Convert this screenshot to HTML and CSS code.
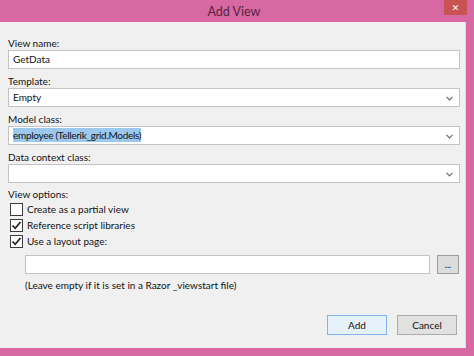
FILE: index.html
```html
<!DOCTYPE html>
<html lang="en">
<head>
  <meta charset="UTF-8">
  <title>Add View</title>
  <link rel="stylesheet" href="styles.css">
</head>
<body>
  <div class="window">
    <!-- Title bar -->
    <div class="titlebar">
      <span class="title">Add View</span>
      <button class="close">&#x2715;</button>
    </div>

    <!-- Dialog body -->
    <div class="panel">
      <div class="field">
        <div class="label">View name:</div>
        <div class="box">GetData</div>
      </div>
      <div class="field">
        <div class="label">Template:</div>
        <div class="box select">Empty
          <svg class="arrow" width="7" height="5" viewBox="0 0 7 5"><path d="M0.5 0.8 L3.5 3.8 L6.5 0.8" fill="none" stroke="#6d6d6d" stroke-width="1.2"/></svg>
        </div>
      </div>
      <div class="field">
        <div class="label">Model class:</div>
        <div class="box select"><span class="selected">employee (Tellerik_grid.Models)</span>
          <svg class="arrow" width="7" height="5" viewBox="0 0 7 5"><path d="M0.5 0.8 L3.5 3.8 L6.5 0.8" fill="none" stroke="#6d6d6d" stroke-width="1.2"/></svg>
        </div>
      </div>
      <div class="field">
        <div class="label">Data context class:</div>
        <div class="box select">
          <svg class="arrow" width="7" height="5" viewBox="0 0 7 5"><path d="M0.5 0.8 L3.5 3.8 L6.5 0.8" fill="none" stroke="#6d6d6d" stroke-width="1.2"/></svg>
        </div>
      </div>

      <div class="options">
        <div class="label">View options:</div>
        <div class="check-row"><span class="check"></span>Create as a partial view</div>
        <div class="check-row"><span class="check">
          <svg width="11" height="11" viewBox="0 0 11 11"><path d="M1.5 5.5 L4.2 8.3 L9.5 2" fill="none" stroke="#222" stroke-width="1.7"/></svg>
        </span>Reference script libraries</div>
        <div class="check-row"><span class="check">
          <svg width="11" height="11" viewBox="0 0 11 11"><path d="M1.5 5.5 L4.2 8.3 L9.5 2" fill="none" stroke="#222" stroke-width="1.7"/></svg>
        </span>Use a layout page:</div>

        <div class="layout-row">
          <div class="box layout-box"></div>
          <button class="browse">...</button>
        </div>
        <div class="hint">(Leave empty if it is set in a Razor _viewstart file)</div>
      </div>

      <div class="actions">
        <button class="btn default">Add</button>
        <button class="btn">Cancel</button>
      </div>
    </div>
  </div>
</body>
</html>
```

FILE: styles.css
```css
body {
  margin: 0;
  background: #d868a2;
  font-family: Lato, "Noto Sans", sans-serif;
  font-size: 10px;
  color: #111;
}

.window {
  width: 474px;
  height: 356px;
  overflow: hidden;
}

.titlebar {
  position: relative;
  height: 22px;
  display: flex;
  align-items: center;
  justify-content: center;
}

.title {
  font-size: 12.5px;
  color: #55243f;
  margin-left: -6px;
}

.close {
  position: absolute;
  top: 0;
  right: 7px;
  width: 23px;
  height: 15px;
  border: none;
  padding: 0;
  background: #c85352;
  color: #fff;
  font-size: 9px;
  font-weight: bold;
  font-family: "DejaVu Sans", sans-serif;
}

.panel {
  width: 466px;
  height: 326px;
  box-sizing: border-box;
  background: #f0f0f0;
  border-right: 1px solid #e4dce0;
  padding: 14px 5px 0 8px;
  display: flex;
  flex-direction: column;
}

.field {
  display: flex;
  flex-direction: column;
}

.label {
  height: 14px;
  line-height: 14px;
}

.field + .field {
  margin-top: 5px;
}

.box {
  position: relative;
  height: 19px;
  box-sizing: border-box;
  background: #fff;
  border: 1px solid #c3c3c3;
  line-height: 17px;
  padding-left: 4px;
}

.select .arrow {
  position: absolute;
  right: 6px;
  top: 7px;
}

.selected {
  background: #9dc8ee;
  padding: 1px 0;
  letter-spacing: -0.3px;
}

.options {
  margin-top: 4px;
  display: flex;
  flex-direction: column;
}

.check-row {
  height: 16px;
  display: flex;
  align-items: center;
  gap: 4px;
  padding-left: 2px;
}

.check {
  width: 13px;
  height: 13px;
  box-sizing: border-box;
  border: 1px solid #3c3c3c;
  background: #fff;
  display: flex;
  align-items: center;
  justify-content: center;
}

.layout-row {
  margin-top: 6px;
  display: flex;
  gap: 7px;
  padding-left: 17px;
  padding-right: 1px;
}

.layout-box {
  flex: 1;
}

.browse {
  width: 22px;
  height: 19px;
  padding: 0;
  border: 1px solid #9d9d9d;
  background: #dcdcdc;
  font-size: 9px;
  line-height: 10px;
  font-family: Lato, sans-serif;
}

.hint {
  padding-left: 17px;
  margin-top: 4px;
  height: 14px;
  line-height: 14px;
}

.actions {
  margin-top: auto;
  margin-bottom: 13px;
  display: flex;
  justify-content: flex-end;
  gap: 10px;
  padding-right: 3px;
}

.btn {
  width: 60px;
  height: 20px;
  padding: 0;
  border: 1px solid #acacac;
  background: #e1e1e1;
  color: #111;
  font-family: Lato, sans-serif;
  font-size: 10px;
}

.btn.default {
  border-color: #7eb4ea;
  background: #e5f1fb;
}
```
